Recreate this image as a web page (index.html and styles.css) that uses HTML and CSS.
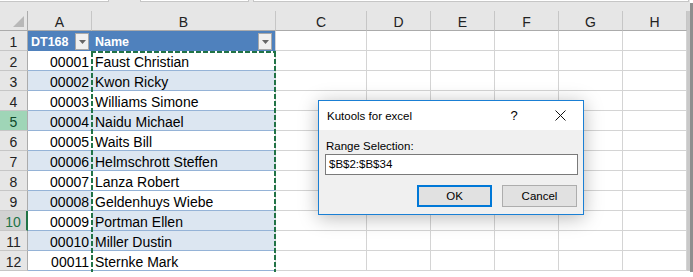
FILE: index.html
```html
<!DOCTYPE html>
<html>
<head>
<meta charset="utf-8">
<link rel="stylesheet" href="styles.css">
</head>
<body>
<div class="shot">
  <div class="topbar"><span class="tb tb1"></span><span class="tb tb2"></span><span class="tb tb3"></span></div>
  <div class="sheet">
    <div class="row hdr">
      <div class="corner"><svg width="27" height="19" viewBox="0 0 27 19"><polygon points="24,5 24,16 13,16" fill="#b8b8b8"/></svg></div>
      <div class="ch">A</div><div class="ch">B</div><div class="ch">C</div><div class="ch">D</div><div class="ch">E</div><div class="ch">F</div><div class="ch">G</div><div class="ch">H</div>
    </div>
    <div class="row">
      <div class="rh">1</div>
      <div class="th"><span>DT168</span><span class="dd"><svg width="7" height="4" viewBox="0 0 7 4"><polygon points="0,0 7,0 3.5,4" fill="#666"/></svg></span></div>
      <div class="th th-b"><span>Name</span><span class="dd dd-b"><svg width="7" height="4" viewBox="0 0 7 4"><polygon points="0,0 7,0 3.5,4" fill="#666"/></svg></span></div>
      <div class="c"></div><div class="c"></div><div class="c"></div><div class="c"></div><div class="c"></div><div class="c"></div>
    </div>
    <div class="row"><div class="rh">2</div><div class="ta">00001</div><div class="tbn">Faust Christian</div><div class="c"></div><div class="c"></div><div class="c"></div><div class="c"></div><div class="c"></div><div class="c"></div></div>
    <div class="row"><div class="rh">3</div><div class="ta bl">00002</div><div class="tbn bl">Kwon Ricky</div><div class="c"></div><div class="c"></div><div class="c"></div><div class="c"></div><div class="c"></div><div class="c"></div></div>
    <div class="row"><div class="rh">4</div><div class="ta">00003</div><div class="tbn">Williams Simone</div><div class="c"></div><div class="c"></div><div class="c"></div><div class="c"></div><div class="c"></div><div class="c"></div></div>
    <div class="row"><div class="rh rh-sel">5</div><div class="ta bl">00004</div><div class="tbn bl">Naidu Michael</div><div class="c"></div><div class="c"></div><div class="c"></div><div class="c"></div><div class="c"></div><div class="c"></div></div>
    <div class="row"><div class="rh">6</div><div class="ta">00005</div><div class="tbn">Waits Bill</div><div class="c"></div><div class="c"></div><div class="c"></div><div class="c"></div><div class="c"></div><div class="c"></div></div>
    <div class="row"><div class="rh">7</div><div class="ta bl">00006</div><div class="tbn bl">Helmschrott Steffen</div><div class="c"></div><div class="c"></div><div class="c"></div><div class="c"></div><div class="c"></div><div class="c"></div></div>
    <div class="row"><div class="rh">8</div><div class="ta">00007</div><div class="tbn">Lanza Robert</div><div class="c"></div><div class="c"></div><div class="c"></div><div class="c"></div><div class="c"></div><div class="c"></div></div>
    <div class="row"><div class="rh">9</div><div class="ta bl">00008</div><div class="tbn">Geldenhuys Wiebe</div><div class="c"></div><div class="c"></div><div class="c"></div><div class="c"></div><div class="c"></div><div class="c"></div></div>
    <div class="row"><div class="rh rh-act">10</div><div class="ta">00009</div><div class="tbn bl">Portman Ellen</div><div class="c"></div><div class="c"></div><div class="c"></div><div class="c"></div><div class="c"></div><div class="c"></div></div>
    <div class="row"><div class="rh">11</div><div class="ta bl">00010</div><div class="tbn bl">Miller Dustin</div><div class="c"></div><div class="c"></div><div class="c"></div><div class="c"></div><div class="c"></div><div class="c"></div></div>
    <div class="row"><div class="rh">12</div><div class="ta">00011</div><div class="tbn">Sternke Mark</div><div class="c"></div><div class="c"></div><div class="c"></div><div class="c"></div><div class="c"></div><div class="c"></div></div>
  </div>
  <svg class="ants" width="690" height="272" viewBox="0 0 690 272">
    <g stroke="#217346" stroke-width="2" fill="none" stroke-dasharray="5 2">
      <line x1="91" y1="52" x2="276" y2="52"/>
      <line x1="92" y1="52" x2="92" y2="272"/>
      <line x1="275" y1="52" x2="275" y2="272"/>
    </g>
  </svg>
  <div class="dialog">
    <div class="dlg-title">
      <span class="dlg-name">Kutools for excel</span>
      <span class="dlg-btn">?</span>
      <span class="dlg-btn"><svg width="11" height="11" viewBox="0 0 11 11"><path d="M0.5 0.5 L10.5 10.5 M10.5 0.5 L0.5 10.5" stroke="#111" stroke-width="1" fill="none"/></svg></span>
    </div>
    <div class="dlg-body">
      <div class="dlg-label">Range Selection:</div>
      <div class="dlg-input">$B$2:$B$34</div>
      <div class="dlg-actions">
        <div class="btn btn-ok">OK</div>
        <div class="btn">Cancel</div>
      </div>
    </div>
  </div>
</div>
</body>
</html>
```
FILE: styles.css
```css
* { box-sizing: border-box; }
html, body { margin: 0; padding: 0; background: #ffffff; }
body { font-family: "Liberation Sans", Arial, sans-serif; }

.shot {
  position: relative;
  width: 690px;
  height: 272px;
  background: #ffffff;
  box-shadow: 3px 3px 0 #8e8e8e;
  overflow: hidden;
}

.topbar {
  height: 11px;
  background: #e6e6e6;
  position: relative;
}
.tb {
  position: absolute;
  top: 0;
  height: 2px;
  background: #ffffff;
  border: 1px solid #c6c6c6;
  border-top: none;
}
.tb1 { left: -1px; width: 110px; }
.tb2 { left: 140px; width: 109px; }
.tb3 { left: 253px; width: 436px; }

.sheet {
  border-right: 3px solid #c9c9c9;
  width: 690px;
  font-size: 14px;
  color: #000;
}

.row {
  display: grid;
  grid-template-columns: 28px 64px 184px 91px 64px 64px 64px 64px 64px;
  height: 20px;
}

.row > div {
  height: 20px;
  border-bottom: 1px solid #d4d4d4;
  border-right: 1px solid #d4d4d4;
  padding-top: 3px;
  line-height: 16px;
  white-space: nowrap;
  overflow: hidden;
}

.hdr > div {
  background: #e6e6e6;
  border-right: 1px solid #c6c6c6;
  border-bottom: 1px solid #ababab;
  text-align: center;
  color: #222;
}
.hdr > .corner {
  padding: 0;
  border-right: 1px solid #ababab;
}
.corner svg { display: block; }

.row > .rh {
  background: #e6e6e6;
  border-right: 1px solid #ababab;
  border-bottom: 1px solid #c6c6c6;
  text-align: center;
  color: #222;
}
.row > .rh-sel {
  background: #9fd5b7;
  color: #0e4a2b;
}
.row > .rh-act {
  background: #d2d2d2;
  color: #217346;
  border-right: 2px solid #217346;
}

.row > .th {
  background: #4f81bd;
  color: #ffffff;
  font-weight: bold;
  font-size: 12.5px;
  border-right: none;
  border-bottom: 1px solid #4f81bd;
  padding: 0 2px 0 3px;
  display: flex;
  align-items: center;
  justify-content: space-between;
}
.row > .th-b { border-right: 1px solid #d4d4d4; }
.th > span:first-child { padding-top: 3px; }
.dd {
  width: 14px;
  height: 17px;
  background: #f0f0f0;
  border: 1px solid #a9a9a9;
  display: flex;
  align-items: center;
  justify-content: center;
  margin-top: 2px;
  margin-right: 1px;
}
.dd svg { display: block; }

.row > .ta {
  text-align: right;
  padding-right: 3px;
  border-bottom: 1px solid #95b3d7;
  border-right: none;
}
.row > .tbn {
  padding-left: 3px;
  border-bottom: 1px solid #95b3d7;
}
.row > .bl { background: #dce6f1; }

.ants {
  position: absolute;
  left: 0;
  top: 0;
  pointer-events: none;
}

.dialog {
  position: absolute;
  left: 318px;
  top: 100px;
  width: 266px;
  height: 115px;
  border: 1px solid #1a7fd4;
  background: #f0f0f0;
  box-shadow: 0 3px 18px rgba(0, 0, 0, 0.28);
  font-size: 11.5px;
  color: #000;
}
.dlg-title {
  height: 29px;
  background: #ffffff;
  display: flex;
  align-items: center;
}
.dlg-name {
  flex: 1;
  padding-left: 8px;
}
.dlg-btn {
  width: 46px;
  height: 29px;
  display: flex;
  align-items: center;
  justify-content: center;
  font-size: 13px;
}
.dlg-btn svg { display: block; }
.dlg-body {
  padding: 9px 5px 0 6px;
}
.dlg-label {
  height: 14px;
  line-height: 14px;
  padding-left: 1px;
  margin-bottom: 1px;
}
.dlg-input {
  height: 21px;
  background: #ffffff;
  border: 1px solid #7a7a7a;
  line-height: 19px;
  padding-left: 3px;
}
.dlg-actions {
  display: flex;
  justify-content: flex-end;
  gap: 10px;
  margin-top: 10px;
  padding-right: 1px;
}
.btn {
  width: 75px;
  height: 22px;
  background: #e1e1e1;
  border: 1px solid #adadad;
  text-align: center;
  line-height: 20px;
}
.btn-ok {
  border: 2px solid #0078d7;
  line-height: 18px;
}
```
